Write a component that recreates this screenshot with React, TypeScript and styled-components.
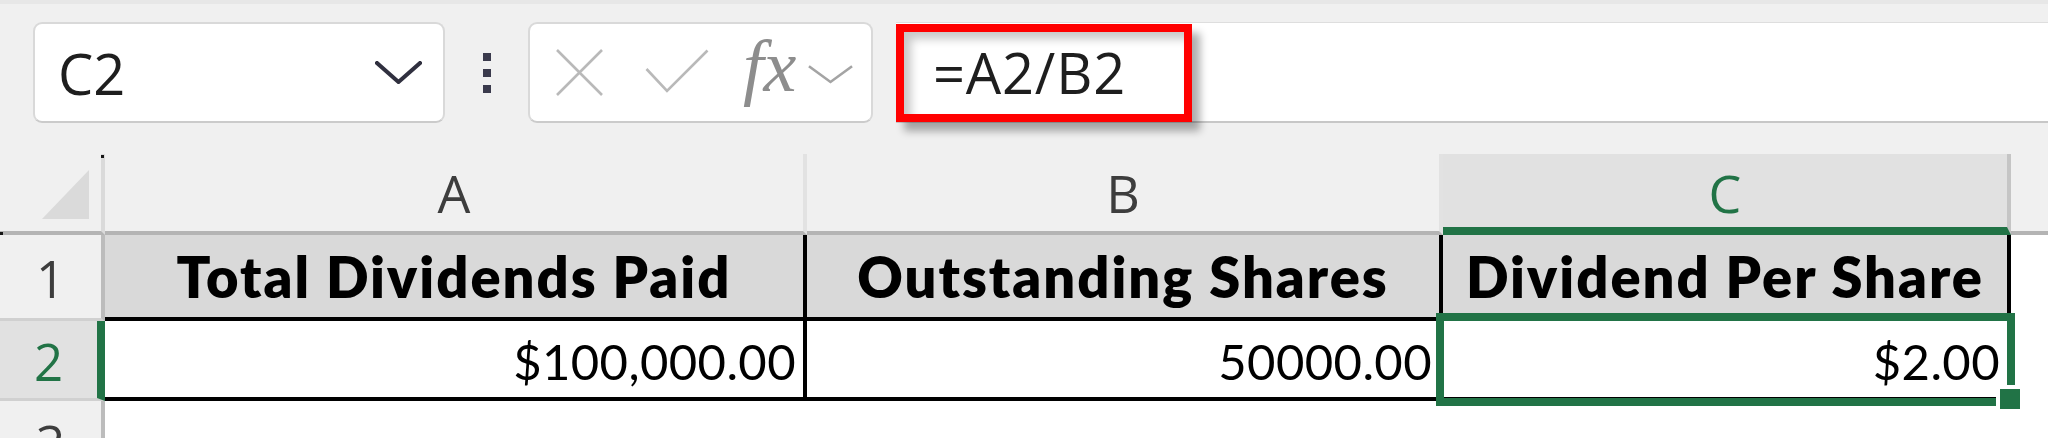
import React from 'react'
import styled, { createGlobalStyle } from 'styled-components'

const GREEN = '#217346'

const GlobalStyle = createGlobalStyle`
  html, body {
    margin: 0;
    padding: 0;
  }
  body {
    background: #f0f0f0;
    font-family: "Open Sans", "Noto Sans", sans-serif;
  }
`

const Window = styled.div`
  width: 2048px;
  height: 438px;
  overflow: hidden;
  display: flex;
  flex-direction: column;
  background: #fff;
`

/* ---------- formula bar ---------- */

const Toolbar = styled.div`
  flex: none;
  height: 154px;
  box-sizing: border-box;
  display: flex;
  align-items: flex-start;
  padding: 22px 0 0 33px;
  background: #f0f0f0;
  box-shadow: inset 0 4px 0 #e7e7e7;
`

const Pill = styled.div<{ $width: number; $padLeft: number }>`
  flex: none;
  width: ${(p) => p.$width}px;
  height: 101px;
  box-sizing: border-box;
  display: flex;
  align-items: center;
  padding-left: ${(p) => p.$padLeft}px;
  padding-right: 21px;
  background: #fff;
  border: 2px solid #d9d9d9;
  border-bottom-color: #cbcbcb;
  border-radius: 9px;
`

const CellRef = styled.span`
  font-size: 56px;
  line-height: 1;
  color: #1e1e1e;
  flex: 1;
`

const Splitter = styled.div`
  flex: none;
  display: flex;
  flex-direction: column;
  gap: 8px;
  margin: 31px 37px 0 38px;

  span {
    width: 8px;
    height: 8px;
    background: #3a3a4c;
  }
`

const IconSlot = styled.span<{ $gap: number; $shift?: number }>`
  display: flex;
  flex: none;
  margin-right: ${(p) => p.$gap}px;
  margin-top: ${(p) => (p.$shift && p.$shift > 0 ? p.$shift * 2 : 0)}px;
  margin-bottom: ${(p) => (p.$shift && p.$shift < 0 ? -p.$shift * 2 : 0)}px;
`

const Fx = styled.span`
  font-family: "Liberation Serif", "Times New Roman", serif;
  font-style: italic;
  font-size: 74px;
  line-height: 1;
  color: #8d8d8d;
  letter-spacing: 0;
`

const FormulaField = styled.div`
  position: relative;
  flex: 1;
  height: 101px;
  box-sizing: border-box;
  margin-left: 23px;
  display: flex;
  align-items: center;
  padding-left: 37px;
  background: #fff;
  border-top: 1px solid #dedede;
  border-bottom: 2px solid #c7c7c7;
  font-size: 56px;
  line-height: 1;
  letter-spacing: 0.8px;
  color: #1e1e1e;
`

const Highlight = styled.div`
  position: absolute;
  left: 0;
  top: 1px;
  width: 296px;
  height: 98px;
  box-sizing: border-box;
  border: 8px solid #ff0000;
  box-shadow: inset 7px 7px 10px rgba(0, 0, 0, 0.22), 8px 9px 8px rgba(0, 0, 0, 0.32);
  pointer-events: none;
`

/* ---------- grid ---------- */

const Sheet = styled.div`
  flex: none;
  display: grid;
  grid-template-columns: 105px 702px 636px 568px 1fr;
  grid-template-rows: 81px 86px 80px 80px;
  background: #fff;
`

const Corner = styled.div`
  position: relative;
  box-sizing: border-box;
  display: flex;
  align-items: flex-end;
  justify-content: flex-end;
  padding: 0 12px 12px 0;
  background: #f0f0f0;
  border-right: 4px solid #dadada;
  border-bottom: 4px solid #b4b4b4;

  &::before,
  &::after {
    content: '';
    position: absolute;
    width: 3px;
    height: 3px;
    background: #151515;
  }
  &::before {
    left: 101px;
    top: 1px;
  }
  &::after {
    left: 0;
    top: 78px;
  }
`

const ColHead = styled.div<{ $active?: boolean; $blank?: boolean }>`
  box-sizing: border-box;
  display: flex;
  align-items: center;
  justify-content: center;
  padding-top: ${(p) => (p.$active ? 4 : 0)}px;
  font-size: 52px;
  line-height: 1;
  color: ${(p) => (p.$active ? GREEN : '#3d3d3d')};
  background: ${(p) => (p.$active ? '#e1e1e1' : '#f0f0f0')};
  border-right: ${(p) => (p.$blank ? 'none' : `4px solid ${p.$active ? '#c5c5c5' : '#e2e2e2'}`)};
  border-bottom: ${(p) => (p.$active ? `8px solid ${GREEN}` : '4px solid #b4b4b4')};
`

const RowHead = styled.div<{ $active?: boolean; $last?: boolean }>`
  box-sizing: border-box;
  display: flex;
  align-items: center;
  justify-content: center;
  padding-top: 4px;
  font-size: 51px;
  line-height: 1;
  color: ${(p) => (p.$active ? GREEN : '#3d3d3d')};
  background: ${(p) => (p.$active ? '#e1e1e1' : '#f0f0f0')};
  border-right: ${(p) => (p.$active ? `8px solid ${GREEN}` : '4px solid #bcbcbc')};
  border-bottom: ${(p) => (p.$last ? 'none' : '3px solid #d0d0d0')};
`

const TitleCell = styled.div`
  box-sizing: border-box;
  display: flex;
  align-items: center;
  justify-content: center;
  padding-top: 2px;
  overflow: hidden;
  white-space: nowrap;
  background: #d9d9d9;
  border-right: 4px solid #000;
  border-bottom: 4px solid #000;
  font-family: Lato, "Open Sans", sans-serif;
  font-weight: 800;
  font-size: 56px;
  line-height: 1;
  letter-spacing: 2px;
  color: #000;
`

const ValueCell = styled.div`
  position: relative;
  box-sizing: border-box;
  display: flex;
  align-items: center;
  justify-content: flex-end;
  padding: 5px 7px 0 0;
  white-space: nowrap;
  background: #fff;
  border-right: 4px solid #000;
  border-bottom: 4px solid #000;
  font-family: Lato, "Open Sans", sans-serif;
  font-size: 49px;
  line-height: 1;
  letter-spacing: 0.4px;
  color: #000;
`

const Blank = styled.div`
  background: #fff;
`

const HeadFill = styled.div`
  background: #f0f0f0;
  border-bottom: 4px solid #b4b4b4;
  box-sizing: border-box;
`

const SelectionFrame = styled.div`
  position: absolute;
  left: -7px;
  top: -8px;
  right: -8px;
  bottom: -9px;
  border: 8px solid ${GREEN};
  z-index: 2;
  pointer-events: none;
`

const FillHandle = styled.span`
  position: absolute;
  right: -13px;
  bottom: -11px;
  width: 20px;
  height: 20px;
  background: ${GREEN};
  box-shadow: 0 0 0 4px #fff;
`

const Chevron = ({ color, stroke, w, h }: { color: string; stroke: number; w: number; h: number }) => (
  <svg width={w} height={h} viewBox={`0 0 ${w} ${h}`}>
    <path
      d={`M2 2 L${w / 2} ${h - 2} L${w - 2} 2`}
      stroke={color}
      strokeWidth={stroke}
      fill="none"
      strokeLinecap="square"
    />
  </svg>
)

const App = () => {
  const titles = ['Total Dividends Paid', 'Outstanding Shares', 'Dividend Per Share']
  const values = ['$100,000.00', '50000.00', '$2.00']

  return (
    <>
      <GlobalStyle />
      <Window>
        <Toolbar>
          <Pill $width={412} $padLeft={23}>
            <CellRef>C2</CellRef>
            <Chevron color="#30303f" stroke={4} w={47} h={23} />
          </Pill>
          <Splitter>
            <span />
            <span />
            <span />
          </Splitter>
          <Pill $width={345} $padLeft={25}>
            <IconSlot $gap={41}>
              <svg width="49" height="49" viewBox="0 0 49 49">
                <path d="M2 2 L47 47 M47 2 L2 47" stroke="#b9b9b9" strokeWidth="2.6" fill="none" />
              </svg>
            </IconSlot>
            <IconSlot $gap={34} $shift={-1.5}>
              <svg width="64" height="44" viewBox="0 0 64 44">
                <path d="M1.5 20 L22 42 L62.5 1.5" stroke="#b9b9b9" strokeWidth="2.6" fill="none" />
              </svg>
            </IconSlot>
            <IconSlot $gap={12} $shift={-7}>
              <Fx>fx</Fx>
            </IconSlot>
            <IconSlot $gap={0} $shift={2}>
              <Chevron color="#a4a4a4" stroke={2.6} w={45} h={19} />
            </IconSlot>
          </Pill>
          <FormulaField>
            =A2/B2
            <Highlight />
          </FormulaField>
        </Toolbar>

        <Sheet>
          <Corner>
            <svg width="47" height="49" viewBox="0 0 47 49">
              <polygon points="47,0 47,49 0,49" fill="#dadada" />
            </svg>
          </Corner>
          <ColHead>A</ColHead>
          <ColHead>B</ColHead>
          <ColHead $active>C</ColHead>
          <HeadFill />

          <RowHead>1</RowHead>
          {titles.map((t) => (
            <TitleCell key={t}>{t}</TitleCell>
          ))}
          <Blank />

          <RowHead $active>2</RowHead>
          {values.map((v, i) => (
            <ValueCell key={v}>
              {v}
              {i === 2 && (
                <SelectionFrame>
                  <FillHandle />
                </SelectionFrame>
              )}
            </ValueCell>
          ))}
          <Blank />

          <RowHead $last>3</RowHead>
          <Blank />
          <Blank />
          <Blank />
          <Blank />
        </Sheet>
      </Window>
    </>
  )
}

export default App
